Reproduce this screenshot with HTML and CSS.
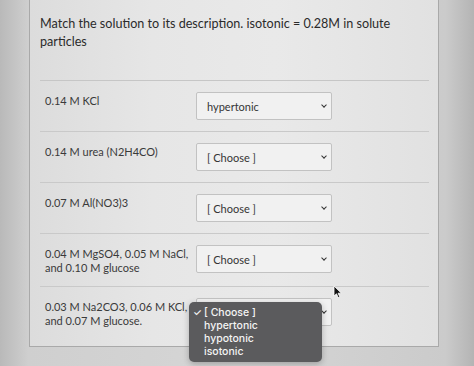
FILE: index.html
```html
<!DOCTYPE html>
<html lang="en">
<head>
    <meta charset="UTF-8">
    <meta name="viewport" content="width=device-width, initial-scale=1.0">
    <title>Matching Question</title>
    <link rel="stylesheet" href="styles.css">
</head>
<body>
    <div class="card">
        <div class="question">
            Match the solution to its description. isotonic = 0.28M in solute particles
        </div>

        <div class="answers">
            <div class="row">
                <div class="label">0.14 M KCl</div>
                <div class="select"><span>hypertonic</span><span class="chevron"></span></div>
            </div>
            <div class="row">
                <div class="label">0.14 M urea (N2H4CO)</div>
                <div class="select"><span>[ Choose ]</span><span class="chevron"></span></div>
            </div>
            <div class="row">
                <div class="label">0.07 M Al(NO3)3</div>
                <div class="select"><span>[ Choose ]</span><span class="chevron"></span></div>
            </div>
            <div class="row">
                <div class="label">0.04 M MgSO4, 0.05 M NaCl,<br>and 0.10 M glucose</div>
                <div class="select"><span>[ Choose ]</span><span class="chevron"></span></div>
                <svg class="cursor" width="10" height="14" viewBox="0 0 10 14">
                    <path d="M1 1 L1 11 L3.5 8.8 L5.2 12.6 L6.8 11.9 L5.1 8.2 L8.4 8.2 Z" fill="#111" stroke="#fff" stroke-width="0.8"/>
                </svg>
            </div>
            <div class="row last">
                <div class="label">0.03 M Na2CO3, 0.06 M KCl,<br>and 0.07 M glucose.</div>
                <div class="select open">
                    <span>[ Choose ]</span><span class="chevron"></span>
                    <ul class="menu">
                        <li><span class="check">✓</span>[ Choose ]</li>
                        <li>hypertonic</li>
                        <li>hypotonic</li>
                        <li>isotonic</li>
                    </ul>
                </div>
            </div>
        </div>
    </div>
</body>
</html>
```

FILE: styles.css
```css
body {
    margin: 0;
    height: 366px;
    overflow: hidden;
    font-family: Lato, 'Open Sans', sans-serif;
    background: linear-gradient(90deg, #b9b9b9 0%, #cfcfcf 6%, #d6d6d6 50%, #cbcbcb 94%, #b4b4b4 100%);
}
.card {
    margin-left: 29px;
    width: 410px;
    height: 347px;
    box-sizing: border-box;
    border: 1px solid #a9a9a9;
    border-top: none;
    background: linear-gradient(90deg, #dcdcdc 0%, #e6e6e6 30%, #e9e9e9 60%, #e1e1e1 100%);
    padding: 15px 9px 0 10px;
}
.question {
    font-size: 12.6px;
    line-height: 18px;
    color: #2b2b2b;
    width: 380px;
    height: 65px;
}
.answers {
    border-top: 1px solid #c6c6c6;
}
.row {
    display: flex;
    align-items: flex-start;
    padding: 11px 0;
    border-bottom: 1px solid #c9c9c9;
    position: relative;
}
.row.last {
    border-bottom: none;
}
.label {
    width: 151px;
    padding-left: 5px;
    padding-top: 2px;
    font-size: 11px;
    line-height: 14px;
    color: #3a3a3a;
    white-space: nowrap;
}
.select {
    position: relative;
    width: 136px;
    height: 28px;
    box-sizing: border-box;
    border: 1px solid #c2c2c2;
    border-radius: 2px;
    background: #f1f1f1;
    display: flex;
    align-items: center;
    justify-content: space-between;
    padding: 0 5px 0 10px;
    font-size: 11px;
    color: #353535;
}
.chevron {
    width: 3px;
    height: 3px;
    border-right: 1.8px solid #333;
    border-bottom: 1.8px solid #333;
    transform: rotate(45deg);
    margin-top: -3px;
}
.cursor {
    position: absolute;
    left: 293px;
    top: 51px;
}
.menu {
    position: absolute;
    left: -8px;
    top: 3px;
    width: 133px;
    margin: 0;
    padding: 4px 0;
    list-style: none;
    background: #5b5b5d;
    border-radius: 5px;
    box-shadow: 0 2px 6px rgba(0,0,0,0.25);
    font-family: Inter, 'Open Sans', sans-serif;
    font-size: 10.5px;
    font-weight: 500;
    color: #f4f4f4;
    z-index: 2;
}
.menu li {
    line-height: 13px;
    padding-left: 15px;
    position: relative;
}
.check {
    position: absolute;
    left: 4px;
    font-size: 10px;
}
```
